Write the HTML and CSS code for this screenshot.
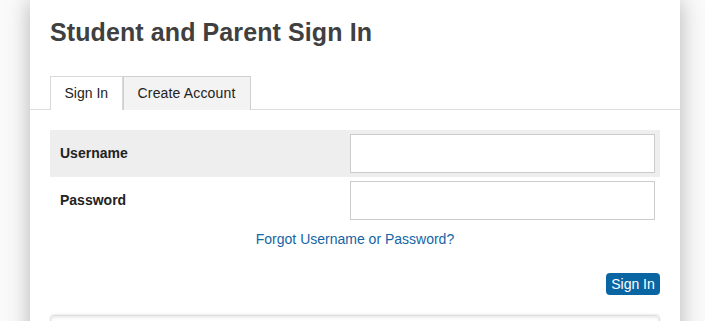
FILE: index.html
```html
<!DOCTYPE html>
<html>
<head>
<meta charset="utf-8">
<link rel="stylesheet" href="styles.css">
</head>
<body>
<div class="panel">
  <h1 class="title">Student and Parent Sign In</h1>
  <div class="tabs">
    <div class="tab active">Sign In</div>
    <div class="tab">Create Account</div>
  </div>
  <div class="form">
    <div class="row shaded">
      <label class="label">Username</label>
      <div class="input"></div>
    </div>
    <div class="row">
      <label class="label">Password</label>
      <div class="input"></div>
    </div>
    <div class="forgot"><a class="link">Forgot Username or Password?</a></div>
    <div class="actions"><button class="btn">Sign In</button></div>
    <div class="box"></div>
  </div>
</div>
</body>
</html>
```
FILE: styles.css
```css
html, body {
  margin: 0;
  padding: 0;
  height: 100%;
  overflow: hidden;
}
body {
  background: #fafafa;
  font-family: "Liberation Sans", Arial, sans-serif;
  color: #222;
}
.panel {
  width: 650px;
  margin: 0 30px;
  background: #fff;
  min-height: 400px;
  box-shadow: 0 0 22px rgba(0, 0, 0, 0.28);
}
.title {
  margin: 0;
  padding: 16px 20px 0 20px;
  font-size: 25px;
  letter-spacing: 0.1px;
  line-height: 33px;
  font-weight: bold;
  color: #404040;
}
.tabs {
  display: flex;
  margin-top: 27px;
  padding-left: 20px;
  border-bottom: 1px solid #dddddd;
  height: 33px;
}
.tab {
  box-sizing: border-box;
  height: 34px;
  padding: 0 14px;
  border: 1px solid #cfcfcf;
  border-bottom: none;
  background: #f3f3f3;
  font-size: 14px;
  line-height: 33px;
  color: #222;
}
.tab.active {
  background: #fff;
  border-color: #d8d8d8;
  height: 34px;
  padding: 0 13.5px;
}
.tab + .tab {
  padding: 0 15px 0 14px;
  letter-spacing: 0.15px;
}
.form {
  padding: 20px 20px 0 20px;
}
.row {
  display: flex;
  align-items: center;
  justify-content: space-between;
  height: 47px;
  box-sizing: border-box;
  padding: 0 5px 0 10px;
}
.row.shaded {
  background: #eeeeee;
}
.label {
  font-size: 14px;
  font-weight: bold;
  color: #222;
  margin-top: -1px;
}
.input {
  width: 305px;
  height: 39px;
  box-sizing: border-box;
  border: 1px solid #cccccc;
  background: #fff;
}
.forgot {
  text-align: center;
  padding-top: 7px;
  height: 24px;
  font-size: 14px;
  line-height: 17px;
}
.link {
  color: #1464a5;
  text-decoration: none;
}
.actions {
  display: flex;
  justify-content: flex-end;
  margin-top: 18px;
}
.btn {
  height: 22px;
  padding: 0 5px;
  width: 54px;
  border: none;
  border-radius: 4px;
  background: #0a66a3;
  color: #fff;
  font-family: "Liberation Sans", Arial, sans-serif;
  font-size: 14px;
  line-height: 22px;
}
.box {
  margin-top: 20px;
  height: 60px;
  border: 1px solid #dedede;
  border-radius: 4px;
  box-shadow: inset 0 2px 3px rgba(0, 0, 0, 0.08), 0 -1px 2px rgba(0, 0, 0, 0.08);
}
```
